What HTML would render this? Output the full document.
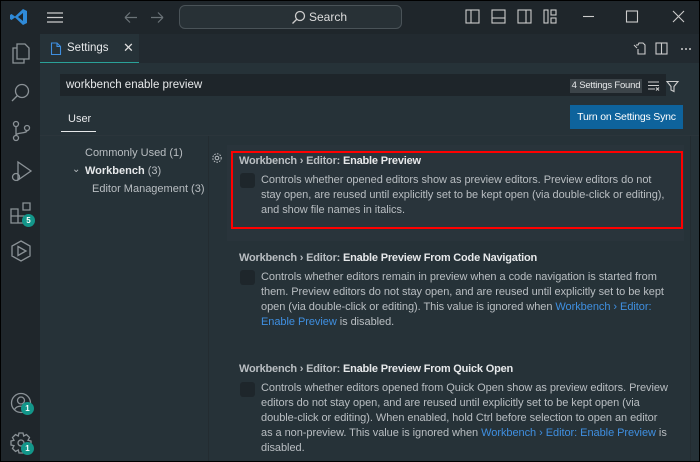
<!DOCTYPE html>
<html><head><meta charset="utf-8"><style>
*{margin:0;padding:0;box-sizing:border-box}
body{width:700px;height:462px;overflow:hidden;background:#000;font-family:"Liberation Sans",sans-serif;font-size:11px;color:#c5c9cc}
#w{position:absolute;left:1px;top:1px;width:698px;height:460px;background:#263238;overflow:hidden}
.a{position:absolute}
#tb{left:0;top:0;width:698px;height:33px;background:#1f262b}
#ab{left:0;top:33px;width:39px;height:427px;background:#1f262b}
#tabs{left:39px;top:33px;width:659px;height:29px;background:#222a30}
.ic{stroke:#8b9297;fill:none;stroke-width:1.3}
.t{position:absolute;white-space:nowrap}
.badge{position:absolute;width:13px;height:13px;border-radius:7px;background:#13968a;color:#fff;font-size:8px;font-weight:bold;text-align:center;line-height:13px}
.desc{position:absolute;left:260px;white-space:nowrap;line-height:15px;color:#b9bec2;font-size:11px;letter-spacing:-0.05px}
.ttl{position:absolute;left:238px;font-weight:bold;color:#b9bec2;font-size:11px;letter-spacing:-0.2px}
.ttl b{color:#e6e8ea}
.cb{position:absolute;left:239px;width:15px;height:15px;background:#1e262b;border-radius:3px}
.lk{color:#3f8fe0}
</style></head><body><div id="w">
<div id="tb" class="a"></div>
<svg class="a" style="left:8px;top:6px" width="20" height="20" viewBox="0 0 20 20"><path d="M14 2 L6 9.5 L2.5 7 L1 8 L1 12 L2.5 13 L6 10.5 L14 18 L18 16 L18 4 Z M14 6 L9 10 L14 14 Z" fill="#2f8ad8" fill-rule="evenodd"/></svg>
<svg class="a" style="left:45px;top:10px" width="18" height="13"><path d="M1 2H17M1 6.5H17M1 11H17" stroke="#ccc" stroke-width="1.2"/></svg>
<svg class="a" style="left:122px;top:9px" width="45" height="15"><path d="M2 7.5H14M2 7.5L7 2.5M2 7.5L7 12.5M28 7.5H40M40 7.5L35 2.5M40 7.5L35 12.5" stroke="#6b7378" stroke-width="1.2" fill="none"/></svg>
<div class="a" style="left:178px;top:4px;width:223px;height:24px;border:1px solid #4a5358;border-radius:6px;background:#283136"></div>
<svg class="a" style="left:290px;top:9px" width="15" height="15"><circle cx="9" cy="6" r="4.5" class="ic" style="stroke:#ccc"/><path d="M6 9L1.5 13.5" stroke="#ccc" stroke-width="1.3"/></svg>
<div class="t" style="left:308px;top:9px;color:#ddd;font-size:12px">Search</div>
<svg class="a" style="left:464px;top:8px" width="130" height="16"><g stroke="#ccc" stroke-width="1.1" fill="none"><rect x="1" y="1" width="13" height="13"/><path d="M6 1V14"/><rect x="27" y="1" width="13" height="13"/><path d="M27 9H40"/><rect x="53" y="1" width="13" height="13"/><path d="M61 1V14"/><rect x="79" y="1" width="4" height="13"/><rect x="86" y="1" width="5" height="5"/><rect x="86" y="9" width="5" height="5"/></g></svg>
<svg class="a" style="left:580px;top:8px" width="110" height="16"><g stroke="#ccc" stroke-width="1.1" fill="none"><path d="M2 7.5H13"/><rect x="45.5" y="2" width="11" height="11"/><path d="M92 2L103 13M103 2L92 13"/></g></svg>
<div id="ab" class="a"></div>
<svg class="a" style="left:8px;top:40px" width="24" height="24"><path d="M8 3H16L20 7V18H8Z M8 7H4V22H15V18" class="ic" stroke-width="1.3"/></svg>
<svg class="a" style="left:8px;top:80px" width="24" height="24"><circle cx="13" cy="10" r="6.5" class="ic"/><path d="M8.5 14.5L3 20" class="ic"/></svg>
<svg class="a" style="left:8px;top:118px" width="24" height="24"><circle cx="7" cy="5" r="2.5" class="ic"/><circle cx="7" cy="19" r="2.5" class="ic"/><circle cx="18" cy="9" r="2.5" class="ic"/><path d="M7 7.5V16.5M18 11.5C18 15 7 13 7 16.5" class="ic"/></svg>
<svg class="a" style="left:8px;top:158px" width="24" height="24"><path d="M9 3L22 12L9 21Z" class="ic"/><circle cx="7" cy="18" r="3.5" class="ic"/></svg>
<svg class="a" style="left:8px;top:200px" width="24" height="24"><path d="M2 8H9V15H2Z M2 15H9V22H2Z M9 15H16V22H9Z M14 2H21V9H14Z" class="ic"/></svg>
<div class="badge" style="left:21px;top:213px">5</div>
<svg class="a" style="left:8px;top:238px" width="24" height="24"><path d="M12 2L21 7V17L12 22L3 17V7Z M9 7.5L17 12L9 16.5Z" class="ic"/></svg>
<svg class="a" style="left:8px;top:390px" width="24" height="24"><circle cx="12" cy="12" r="9.5" class="ic"/><circle cx="12" cy="9.5" r="3.5" class="ic"/><path d="M5.5 18.5C8 14 16 14 18.5 18.5" class="ic"/></svg>
<div class="badge" style="left:20px;top:401px">1</div>
<svg class="a" style="left:8px;top:430px" width="24" height="24"><circle cx="12" cy="12" r="3" class="ic"/><path d="M10 2H14L14.7 5L17.5 3.5L20.5 6.5L19 9.3L22 10V14L19 14.7L20.5 17.5L17.5 20.5L14.7 19L14 22H10L9.3 19L6.5 20.5L3.5 17.5L5 14.7L2 14V10L5 9.3L3.5 6.5L6.5 3.5L9.3 5Z" class="ic"/></svg>
<div class="badge" style="left:20px;top:441px">1</div>
<div id="tabs" class="a"></div>
<div class="a" style="left:39px;top:33px;width:99px;height:29px;background:#263238;border-bottom:1px solid #2aa198"></div>
<svg class="a" style="left:49px;top:41px" width="12" height="14"><path d="M1.5 1H7L10.5 4.5V12.5H1.5Z M7 1V4.5H10.5" stroke="#3f8fe0" stroke-width="1.1" fill="none"/></svg>
<div class="t" style="left:66px;top:41px;color:#e6e8ea;font-size:11.5px">Settings</div>
<div class="t" style="left:122px;top:39px;color:#ddd;font-size:13px">✕</div>
<svg class="a" style="left:632px;top:40px" width="60" height="16"><g stroke="#ccc" stroke-width="1.1" fill="none"><path d="M3 4H5L6 2H10L12 4V13H5V8"/><path d="M1 4L4 7"/><rect x="23" y="2" width="11" height="11"/><path d="M28.5 2V13"/></g><g fill="#ccc"><circle cx="49" cy="8" r="1"/><circle cx="53" cy="8" r="1"/><circle cx="57" cy="8" r="1"/></g></svg>
<div class="a" style="left:59px;top:73px;width:606px;height:22px;background:#1e252a"></div>
<div class="t" style="left:65px;top:78px;color:#e6e8ea;font-size:11.5px">workbench enable preview</div>
<div class="t" style="left:569px;top:78px;width:72px;background:#3c4449;color:#e6e8ea;font-size:9.5px;letter-spacing:-0.2px;line-height:14px;text-align:center">4 Settings Found</div>
<svg class="a" style="left:646px;top:79px" width="34" height="13"><g stroke="#ccc" stroke-width="1.1" fill="none"><path d="M1 2H12M1 5.5H12M1 9H8M9 7.5L12 10.5M12 7.5L9 10.5"/><path d="M20 1.5H31L27 6.5V11.5L24 10V6.5Z"/></g></svg>
<div class="t" style="left:67px;top:112px;color:#e6e8ea;font-size:11px">User</div>
<div class="a" style="left:60px;top:130px;width:35px;height:1px;background:#e6e8ea"></div>
<div class="t" style="left:569px;top:104px;width:113px;height:24px;background:#0e639c;color:#fff;font-size:10.5px;letter-spacing:-0.2px;line-height:24px;text-align:center">Turn on Settings Sync</div>
<div class="a" style="left:39px;top:134px;width:659px;height:1px;background:#2b353b"></div>
<div class="t" style="left:84px;top:146px;color:#b9bec2">Commonly Used (1)</div>
<div class="t" style="left:71px;top:163px;color:#b9bec2;font-size:10px">⌄</div>
<div class="t" style="left:84px;top:164px;color:#b9bec2"><b style="color:#e6e8ea">Workbench</b> (3)</div>
<div class="t" style="left:91px;top:182px;color:#b9bec2">Editor Management (3)</div>
<div class="a" style="left:207px;top:135px;width:1px;height:325px;background:#232c31"></div>
<div class="a" style="left:689px;top:135px;width:1px;height:325px;background:#232c31"></div>
<div class="a" style="left:226px;top:144px;width:457px;height:96px;background:#29343b"></div>
<svg class="a" style="left:210px;top:151px" width="12" height="12"><circle cx="6" cy="6" r="1.8" stroke="#b9bec2" fill="none"/><circle cx="6" cy="6" r="4.2" stroke="#b9bec2" fill="none" stroke-dasharray="1.6 1.2"/></svg>
<div class="a" style="left:230px;top:150px;width:452px;height:78px;border:2px solid #ff0000"></div>
<div class="ttl" style="top:154px">Workbench › Editor: <b>Enable Preview</b></div>
<div class="cb" style="top:172px"></div>
<div class="desc" style="top:172px">Controls whether opened editors show as preview editors. Preview editors do not<br>stay open, are reused until explicitly set to be kept open (via double-click or editing),<br>and show file names in italics.</div>
<div class="ttl" style="top:251px">Workbench › Editor: <b>Enable Preview From Code Navigation</b></div>
<div class="cb" style="top:269px"></div>
<div class="desc" style="top:269px">Controls whether editors remain in preview when a code navigation is started from<br>them. Preview editors do not stay open, and are reused until explicitly set to be kept<br>open (via double-click or editing). This value is ignored when <span class="lk">Workbench › Editor:</span><br><span class="lk">Enable Preview</span> is disabled.</div>
<div class="ttl" style="top:362px">Workbench › Editor: <b>Enable Preview From Quick Open</b></div>
<div class="cb" style="top:381px"></div>
<div class="desc" style="top:380px">Controls whether editors opened from Quick Open show as preview editors. Preview<br>editors do not stay open, and are reused until explicitly set to be kept open (via<br>double-click or editing). When enabled, hold Ctrl before selection to open an editor<br>as a non-preview. This value is ignored when <span class="lk">Workbench › Editor: Enable Preview</span> is<br>disabled.</div>
</div></body></html>
